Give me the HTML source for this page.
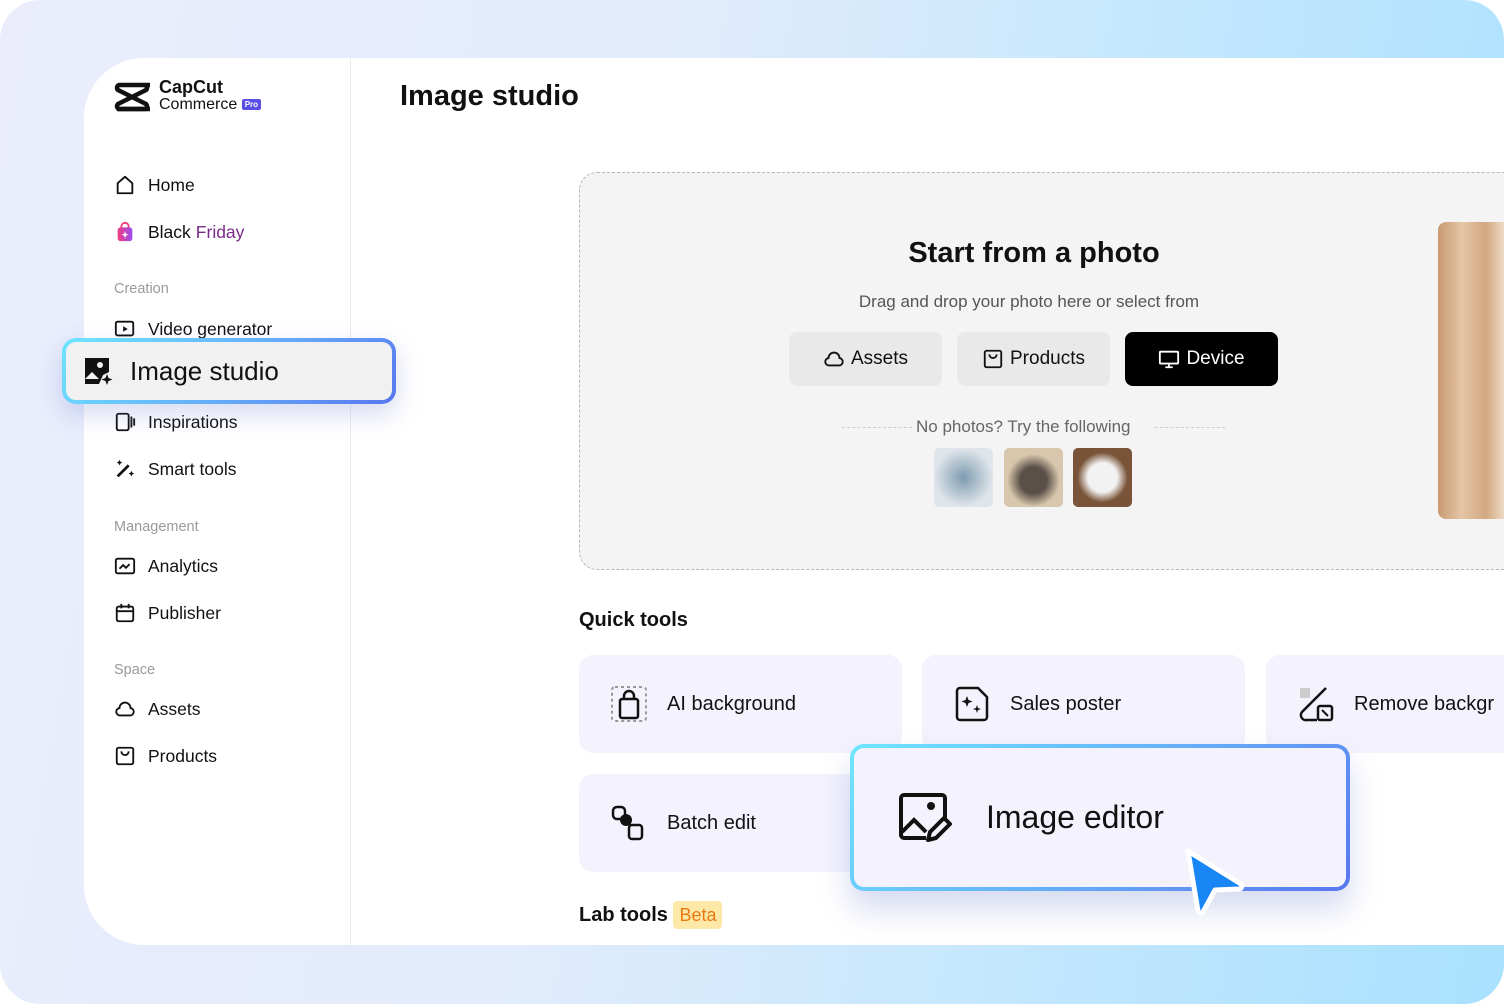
<!DOCTYPE html>
<html><head><meta charset="utf-8"><style>
*{margin:0;padding:0;box-sizing:border-box}
html,body{width:1504px;height:1004px;overflow:hidden;background:#fff;font-family:"Liberation Sans",sans-serif;color:#111}
.frame{position:absolute;left:0;top:0;width:1504px;height:1004px;border-radius:40px;overflow:hidden;background:linear-gradient(100deg,#ebedfc 0%,#e2ecfc 40%,#bfe6fd 75%,#a8e1fe 100%)}
.card{position:absolute;left:84px;top:58px;width:1420px;height:887px;background:#fff;border-radius:60px 0 0 60px;overflow:hidden}
.side{position:absolute;left:0;top:0;width:267px;height:887px;border-right:1px solid #ececec}
.abs{position:absolute}
.nav{position:absolute;left:30px;display:flex;align-items:center;font-size:17.5px;color:#111}
.nav svg{width:22px;height:22px;margin-right:12px}
.sec{position:absolute;left:30px;font-size:14.5px;color:#9a9a9a}
.btn{position:absolute;top:332px;height:54px;width:153px;border-radius:8px;background:#e9e9e9;display:flex;align-items:center;justify-content:center;font-size:19px;color:#111}
.btn svg{width:22px;height:22px;margin-right:6px}
.tool{position:absolute;height:98px;width:323px;border-radius:14px;background:#f3f2fd;display:flex;align-items:center;font-size:20px;color:#111}
.tool svg{width:40px;height:40px;margin-left:30px;margin-right:18px}
</style></head><body>
<div class="frame">
<div class="card">
 <div class="side">
  <svg class="abs" style="left:29px;top:24px" width="40" height="30" viewBox="0 0 40 30"><path d="M37 3H6a3 3 0 00-1 5l28 14a3 3 0 01-1 5H4" fill="none" stroke="#111" stroke-width="4.5" stroke-linejoin="round"/><path d="M37 27H6a3 3 0 01-1-5l28-14a3 3 0 00-1-5" fill="none" stroke="#111" stroke-width="4.5" stroke-linejoin="round"/></svg>
  <div class="abs" style="left:75px;top:20px;font-size:18px;font-weight:bold;line-height:18px">CapCut</div>
  <div class="abs" style="left:75px;top:38px;font-size:16px;line-height:18px">Commerce <span style="background:#5b4ee6;color:#fff;font-size:8px;padding:1px 3px;border-radius:2px;vertical-align:2px;font-weight:bold">Pro</span></div>
  <div class="nav" style="top:116px"><svg viewBox="0 0 24 24"><path d="M4 10l8-7 8 7v11H4z" fill="none" stroke="#111" stroke-width="2" stroke-linejoin="round"/></svg>Home</div>
  <div class="nav" style="top:163px"><svg viewBox="0 0 24 24"><defs><linearGradient id="g" x1="0" x2="1"><stop offset="0" stop-color="#f23c7e"/><stop offset="1" stop-color="#9b4ef0"/></linearGradient></defs><path d="M8 8V6a4 4 0 018 0v2" fill="none" stroke="#f23c7e" stroke-width="2"/><rect x="4" y="7" width="16" height="15" rx="3" fill="url(#g)"/><path d="M12 11l1 3 3 1-3 1-1 3-1-3-3-1 3-1z" fill="#fff"/></svg>Black <span style="color:#7a2b8a;margin-left:5px">Friday</span></div>
  <div class="sec" style="top:223px">Creation</div>
  <div class="nav" style="top:260px"><svg viewBox="0 0 24 24"><rect x="2" y="4" width="19" height="15" rx="2" fill="none" stroke="#111" stroke-width="2"/><path d="M10 9v6l5-3z" fill="#111"/></svg>Video generator</div>
  <div class="nav" style="top:353px"><svg viewBox="0 0 24 24"><rect x="3" y="3" width="13" height="18" rx="2" fill="none" stroke="#111" stroke-width="2"/><path d="M19 6v12M22 8v8" stroke="#111" stroke-width="2"/></svg>Inspirations</div>
  <div class="nav" style="top:400px"><svg viewBox="0 0 24 24"><path d="M4 20L16 8" stroke="#111" stroke-width="3"/><path d="M6 2l1 2 2 1-2 1-1 2-1-2-2-1 2-1zM19 14l1 2 2 1-2 1-1 2-1-2-2-1 2-1z" fill="#111"/></svg>Smart tools</div>
  <div class="sec" style="top:461px">Management</div>
  <div class="nav" style="top:497px"><svg viewBox="0 0 24 24"><rect x="2" y="4" width="20" height="16" rx="2" fill="none" stroke="#111" stroke-width="2"/><path d="M6 15l4-4 3 3 4-4" fill="none" stroke="#111" stroke-width="2"/></svg>Analytics</div>
  <div class="nav" style="top:544px"><svg viewBox="0 0 24 24"><rect x="3" y="5" width="18" height="16" rx="2" fill="none" stroke="#111" stroke-width="2"/><path d="M3 10h18M8 2v5M16 2v5" stroke="#111" stroke-width="2"/></svg>Publisher</div>
  <div class="sec" style="top:604px">Space</div>
  <div class="nav" style="top:640px"><svg viewBox="0 0 24 24"><path d="M7 19a4 4 0 01-1-8 6 6 0 0112 0 4 4 0 01-1 8z" fill="none" stroke="#111" stroke-width="2"/></svg>Assets</div>
  <div class="nav" style="top:687px"><svg viewBox="0 0 24 24"><rect x="3" y="3" width="18" height="18" rx="2" fill="none" stroke="#111" stroke-width="2"/><path d="M8 7a4 4 0 008 0" fill="none" stroke="#111" stroke-width="2"/></svg>Products</div>
 </div>
 <div class="abs" style="left:316px;top:22px;font-size:29px;font-weight:bold">Image studio</div>
 <div class="abs" style="left:495px;top:114px;width:960px;height:398px;background:#f4f4f4;border:1.5px dashed #b8b8b8;border-radius:18px"></div>
 <div class="abs" style="left:1354px;top:164px;width:80px;height:297px;border-radius:8px 0 0 8px;background:linear-gradient(90deg,#c99a72,#e4c6a5 30%,#d2a780 60%,#f0e0cc 85%,#b88560)"></div>
 <div class="abs" style="left:500px;top:179px;width:900px;text-align:center;font-size:29px;font-weight:bold">Start from a photo</div>
 <div class="abs" style="left:495px;top:234px;width:900px;text-align:center;font-size:17px;color:#555">Drag and drop your photo here or select from</div>
</div>
<div class="btn" style="left:789px"><svg viewBox="0 0 24 24"><path d="M7 19a4 4 0 01-1-8 6 6 0 0112 0 4 4 0 01-1 8z" fill="none" stroke="#111" stroke-width="2"/></svg>Assets</div>
<div class="btn" style="left:957px"><svg viewBox="0 0 24 24"><rect x="3" y="3" width="18" height="18" rx="2" fill="none" stroke="#111" stroke-width="2"/><path d="M8 7a4 4 0 008 0" fill="none" stroke="#111" stroke-width="2"/></svg>Products</div>
<div class="btn" style="left:1125px;background:#000;color:#fff"><svg viewBox="0 0 24 24"><rect x="2" y="4" width="20" height="13" rx="1" fill="none" stroke="#fff" stroke-width="2"/><path d="M8 21h8M12 17v4" stroke="#fff" stroke-width="2"/></svg>Device</div>
<div class="abs" style="left:842px;top:427px;width:70px;border-top:1.5px dashed #ccc"></div>
<div class="abs" style="left:1155px;top:427px;width:70px;border-top:1.5px dashed #ccc"></div>
<div class="abs" style="left:916px;top:417px;font-size:17px;color:#666">No photos? Try the following</div>
<div class="abs" style="left:934px;top:448px;width:59px;height:59px;border-radius:5px;background:radial-gradient(circle at 50% 50%,#7d9bb0,#dfe5ea 70%)"></div>
<div class="abs" style="left:1004px;top:448px;width:59px;height:59px;border-radius:5px;background:radial-gradient(circle at 50% 55%,#5a5048 30%,#d9c7ad 60%)"></div>
<div class="abs" style="left:1073px;top:448px;width:59px;height:59px;border-radius:5px;background:radial-gradient(ellipse at 50% 50%,#f2f2f2 35%,#7a5438 60%)"></div>
<div class="abs" style="left:579px;top:609px;font-size:20px;font-weight:bold">Quick tools</div>
<div class="tool" style="left:579px;top:655px"><svg viewBox="0 0 40 40"><rect x="3" y="3" width="34" height="34" rx="3" fill="none" stroke="#999" stroke-width="2" stroke-dasharray="3 3"/><rect x="11" y="15" width="18" height="19" rx="2" fill="none" stroke="#111" stroke-width="2.5"/><path d="M15 15v-3a5 5 0 0110 0v3" fill="none" stroke="#111" stroke-width="2.5"/></svg>AI background</div>
<div class="tool" style="left:922px;top:655px"><svg viewBox="0 0 40 40"><path d="M5 7a3 3 0 013-3h18l9 9v20a3 3 0 01-3 3H8a3 3 0 01-3-3z" fill="none" stroke="#111" stroke-width="2.5"/><path d="M15 12l1.5 4 4 1.5-4 1.5-1.5 4-1.5-4-4-1.5 4-1.5zM25 21l1 3 3 1-3 1-1 3-1-3-3-1 3-1z" fill="#111"/></svg>Sales poster</div>
<div class="tool" style="left:1266px;top:655px;width:260px"><svg viewBox="0 0 40 40"><rect x="4" y="4" width="10" height="10" fill="#ccc"/><path d="M30 4L6 28a5 5 0 005 8h10" fill="none" stroke="#111" stroke-width="2.5"/><rect x="22" y="22" width="14" height="14" rx="2" fill="none" stroke="#111" stroke-width="2.5"/><path d="M26 26l6 6" stroke="#111" stroke-width="2"/></svg>Remove backgr</div>
<div class="tool" style="left:579px;top:774px"><svg viewBox="0 0 40 40"><rect x="4" y="4" width="12" height="12" rx="4" fill="none" stroke="#111" stroke-width="2.5"/><circle cx="17" cy="17" r="6" fill="#111"/><rect x="20" y="22" width="13" height="14" rx="3" fill="none" stroke="#111" stroke-width="2.5"/></svg>Batch edit</div>
<div class="abs" style="left:850px;top:744px;width:500px;height:147px;border-radius:14px;padding:4px;background:linear-gradient(135deg,#6ee6ff,#64a6f7 60%,#5877ee);box-shadow:0 18px 30px rgba(90,110,200,.25)">
 <div style="width:100%;height:100%;background:#f4f3fd;border-radius:10px;display:flex;align-items:center;font-size:32px">
  <svg style="margin-left:44px;margin-right:32px" width="56" height="52" viewBox="0 0 56 52"><path d="M28 46H6a3 3 0 01-3-3V6a3 3 0 013-3h38a3 3 0 013 3v20" fill="none" stroke="#111" stroke-width="4"/><circle cx="33" cy="14" r="4" fill="#111"/><path d="M4 40l12-12 12 12" fill="none" stroke="#111" stroke-width="4"/><path d="M30 48l2-8 14-14 6 6-14 14z" fill="none" stroke="#111" stroke-width="4" stroke-linejoin="round"/></svg>Image editor</div>
</div>
<svg class="abs" style="left:1180px;top:845px" width="70" height="76" viewBox="0 0 70 76"><path d="M8 6l10 60a3 3 0 005 1l12-22 24-1a3 3 0 002-5z" fill="#1a85f5" stroke="#fff" stroke-width="5" stroke-linejoin="round"/></svg>
<div class="abs" style="left:579px;top:904px;font-size:20px;font-weight:bold">Lab tools <span style="background:#fde8a8;color:#e87a12;font-weight:normal;font-size:18px;padding:4px 6px;border-radius:4px">Beta</span></div>
<div class="abs" style="left:62px;top:338px;width:334px;height:66px;border-radius:14px;padding:4px;background:linear-gradient(135deg,#6ee6ff,#64a6f7 60%,#5877ee);box-shadow:0 10px 25px rgba(90,110,200,.25)">
 <div style="width:100%;height:100%;background:#f1f1f1;border-radius:10px;display:flex;align-items:center;font-size:26px">
  <svg style="margin-left:16px;margin-right:16px" width="32" height="32" viewBox="0 0 32 32"><path d="M3 3h24v14l-6 3-4 9H3z" fill="#111"/><circle cx="18" cy="10" r="3" fill="#f1f1f1"/><path d="M3 24l7-7 7 7" fill="#f1f1f1"/><path d="M25 19l1.5 4 4 1.5-4 1.5-1.5 4-1.5-4-4-1.5 4-1.5z" fill="#111"/></svg>Image studio</div>
</div>
</div>
</body></html>
